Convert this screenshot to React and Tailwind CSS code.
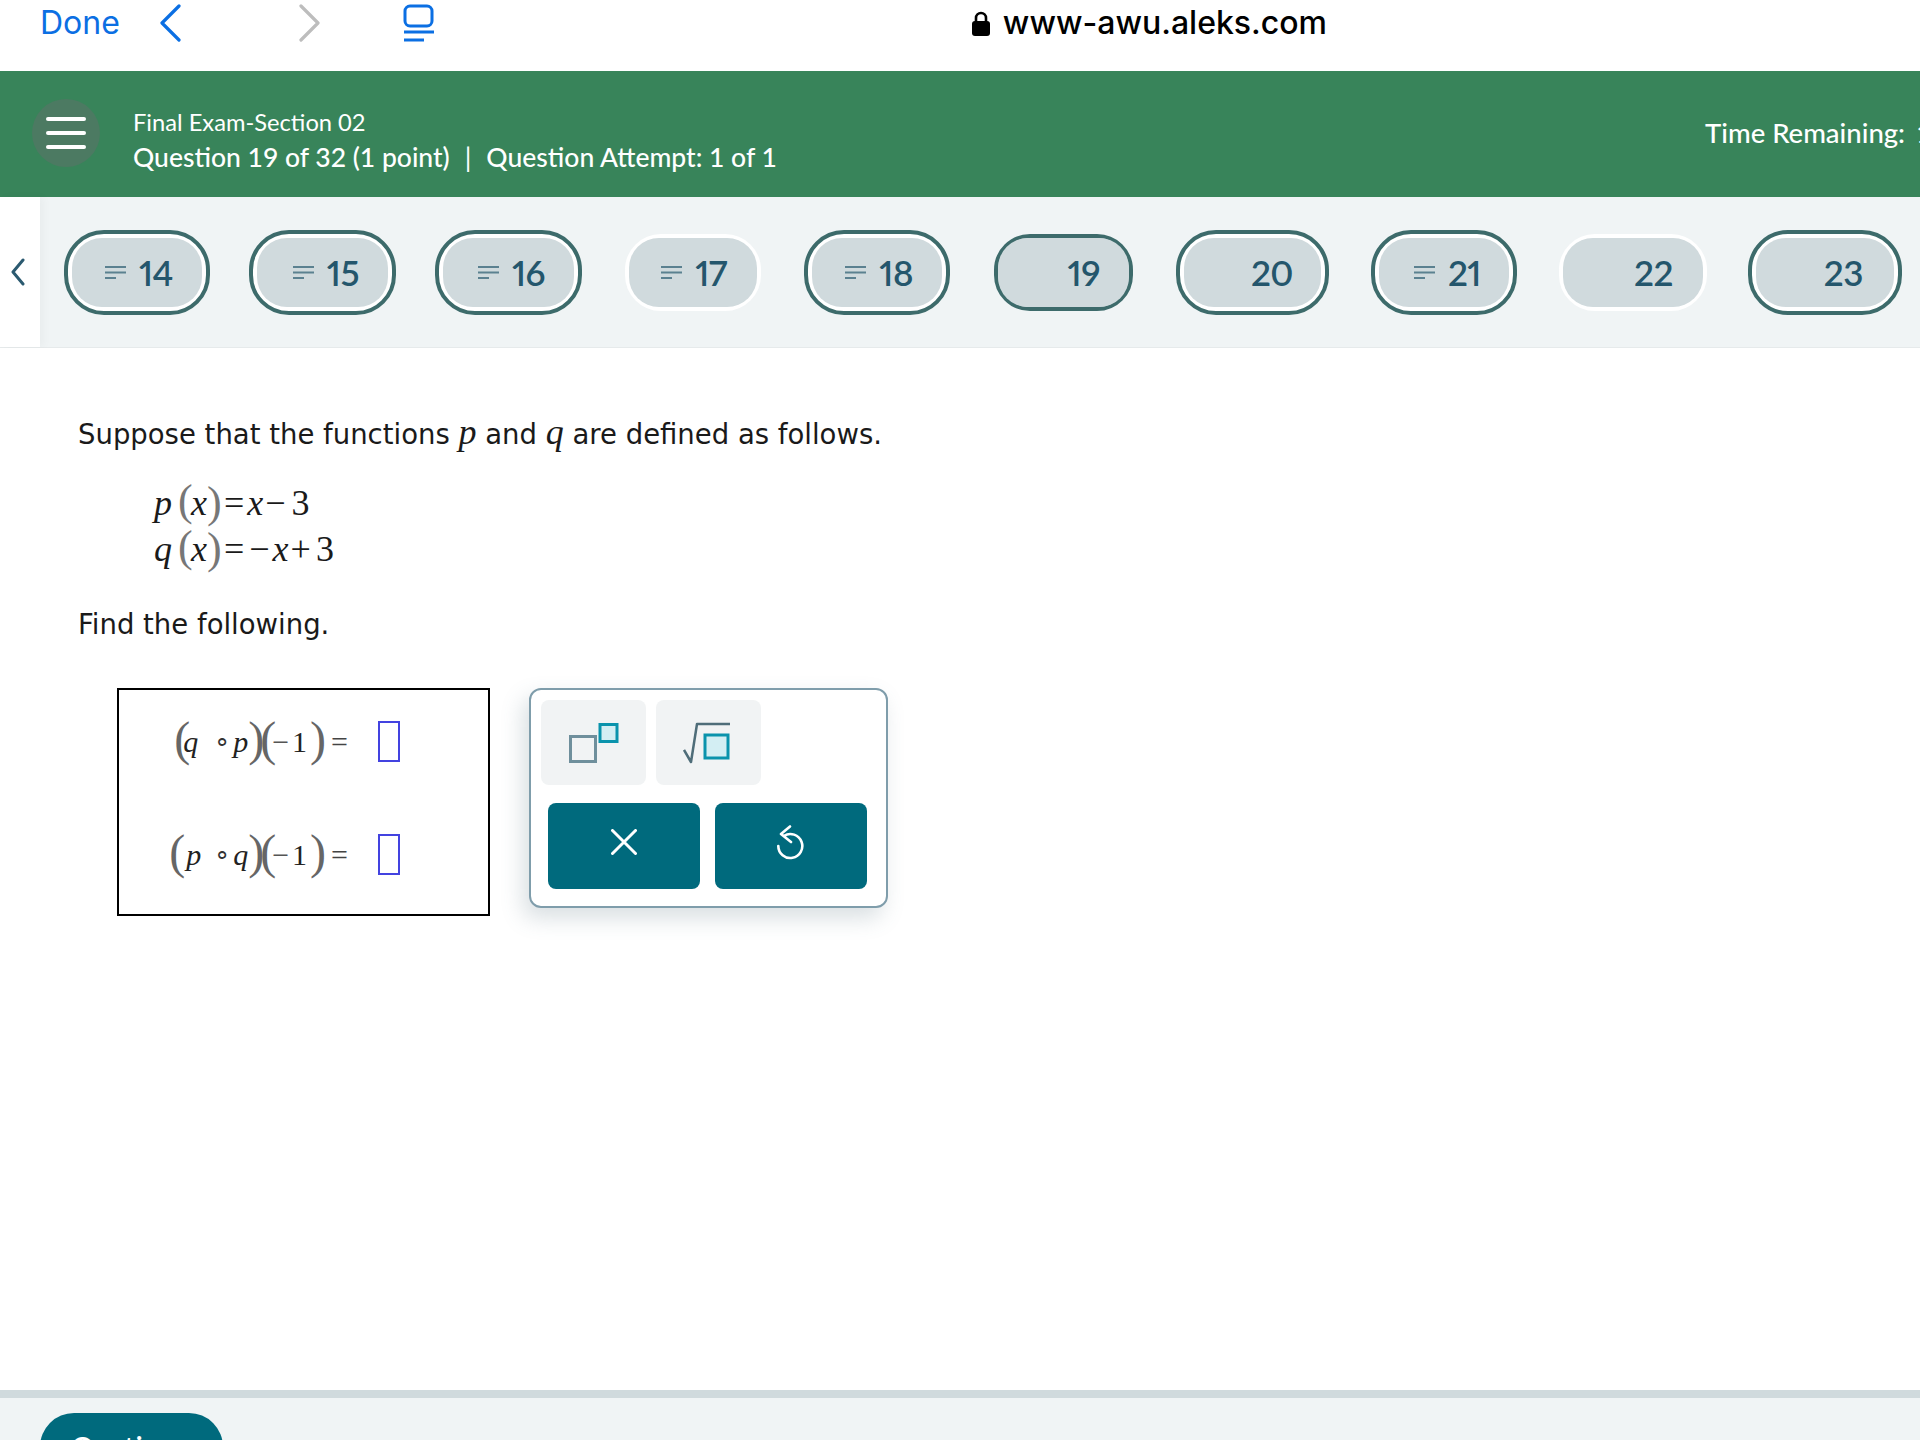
const pills = [
  { label: "14", flag: true, kind: "ring", width: "w-[146px]", gap: "ml-0", pad: "pr-[29px]" },
  { label: "15", flag: true, kind: "ring", width: "w-[147px]", gap: "ml-[39px]", pad: "pr-[29px]" },
  { label: "16", flag: true, kind: "ring", width: "w-[147px]", gap: "ml-[39px]", pad: "pr-[29px]" },
  { label: "17", flag: true, kind: "plain", width: "w-[136px]", gap: "ml-[43px]", pad: "pr-[30px]" },
  { label: "18", flag: true, kind: "ring", width: "w-[146px]", gap: "ml-[43px]", pad: "pr-[29px]" },
  { label: "19", flag: false, kind: "current", width: "w-[139px]", gap: "ml-[44px]", pad: "pr-[29px]" },
  { label: "20", flag: false, kind: "ring", width: "w-[153px]", gap: "ml-[43px]", pad: "pr-[28px]" },
  { label: "21", flag: true, kind: "ring", width: "w-[146px]", gap: "ml-[42px]", pad: "pr-[28px]" },
  { label: "22", flag: false, kind: "plain", width: "w-[148px]", gap: "ml-[42px]", pad: "pr-[30px]" },
  { label: "23", flag: false, kind: "ring", width: "w-[154px]", gap: "ml-[41px]", pad: "pr-[31px]" },
];

function FlagLines() {
  return (
    <svg width="22" height="14" viewBox="0 0 22 14" className="mr-[12px] mt-[2px] shrink-0">
      <rect x="0" y="0" width="21" height="2" fill="#5b8190" />
      <rect x="0" y="5.5" width="21" height="2" fill="#5b8190" />
      <rect x="0" y="11" width="11" height="2" fill="#5b8190" />
    </svg>
  );
}

function QuestionPill({ pill }) {
  const inner = (
    <div className={`flex h-[69px] flex-1 items-center justify-end rounded-[30px] bg-[#d0dadd] ${pill.pad}`}>
      {pill.flag && <FlagLines />}
      <span className="font-['Lato',sans-serif] text-[35px] font-semibold leading-none tracking-[-0.5px] text-[#24566c] proportional-nums">
        {pill.label}
      </span>
    </div>
  );

  if (pill.kind === "ring") {
    return (
      <div className={`flex h-[85px] rounded-[40px] border-[4px] border-[#3d6b6b] bg-white p-[4px] ${pill.width} ${pill.gap}`}>
        {inner}
      </div>
    );
  }
  if (pill.kind === "current") {
    return (
      <div className={`flex h-[77px] rounded-[36px] border-[4px] border-[#3d6b6b] bg-[#d0dadd] ${pill.width} ${pill.gap}`}>
        {inner}
      </div>
    );
  }
  return (
    <div className={`flex h-[77px] rounded-[36px] border-[4px] border-white bg-white ${pill.width} ${pill.gap}`}>
      {inner}
    </div>
  );
}

function BrowserBar() {
  return (
    <div className="flex h-[71px] items-start bg-white">
      <span className="ml-[40px] mt-[3px] font-['Inter',sans-serif] text-[32px] leading-[40px] text-[#0b6fe3]">Done</span>
      <svg width="24" height="38" viewBox="0 0 24 38" fill="none" className="ml-[38px] mt-[4px]">
        <path d="M21 2 L4 19 L21 36" stroke="#0b6fe3" strokeWidth="3.2" strokeLinecap="round" strokeLinejoin="round" />
      </svg>
      <svg width="24" height="38" viewBox="0 0 24 38" fill="none" className="ml-[116px] mt-[4px]">
        <path d="M3 2 L20 19 L3 36" stroke="#bdbdbd" strokeWidth="3.2" strokeLinecap="round" strokeLinejoin="round" />
      </svg>
      <svg width="32" height="38" viewBox="0 0 32 38" fill="none" className="ml-[81px] mt-[4px]">
        <rect x="2" y="2" width="27" height="20" rx="5" stroke="#0b6fe3" strokeWidth="3" />
        <path d="M1 28 H31" stroke="#0b6fe3" strokeWidth="3" />
        <path d="M1 36 H21" stroke="#0b6fe3" strokeWidth="3" />
      </svg>
      <svg width="18" height="27" viewBox="0 0 18 27" className="ml-[537px] mt-[10px]">
        <path d="M4 12 V8 a5 5 0 0 1 10 0 V12" fill="none" stroke="#000" strokeWidth="2.6" />
        <rect x="0" y="11" width="18" height="15" rx="3" fill="#000" />
      </svg>
      <span className="ml-[13px] mt-[2px] font-['Inter',sans-serif] text-[32px] font-medium leading-[42px] text-black">www-awu.aleks.com</span>
    </div>
  );
}

function ExamHeader() {
  return (
    <div className="flex h-[126px] items-center overflow-hidden bg-[#38845a] pb-[2px]">
      <div className="ml-[32px] flex h-[68px] w-[68px] shrink-0 flex-col items-center justify-center gap-[10px] rounded-full bg-[#4c7a62]">
        <div className="h-[4px] w-[40px] rounded-full bg-white" />
        <div className="h-[4px] w-[40px] rounded-full bg-white" />
        <div className="h-[4px] w-[40px] rounded-full bg-white" />
      </div>
      <div className="ml-[33px] mt-[14px] w-[700px] font-['Lato',sans-serif] text-white">
        <div className="text-[23.7px] leading-[30px]">Final Exam-Section 02</div>
        <div className="mt-[3px] text-[26.5px] font-medium leading-[34px]">
          Question 19 of 32 (1 point)<span className="mx-[15px] font-normal">|</span>Question Attempt: 1 of 1
        </div>
      </div>
      <div className="ml-auto w-[215px] shrink-0 whitespace-nowrap font-['Lato',sans-serif] text-[27.5px] font-medium text-white">
        Time Remaining: <span className="ml-[4px]">1</span>
      </div>
    </div>
  );
}

function PillStrip() {
  return (
    <div className="flex h-[151px] border-b border-[#e6eaeb] bg-[#f0f4f5]">
      <div className="flex w-[40px] shrink-0 items-center bg-white pl-[10px] shadow-[4px_0_8px_rgba(0,0,0,0.03)]">
        <svg width="15" height="28" viewBox="0 0 15 28" fill="none">
          <path d="M13 2 L3 14 L13 26" stroke="#2b5a70" strokeWidth="3" strokeLinecap="round" strokeLinejoin="round" />
        </svg>
      </div>
      <div className="ml-[24px] flex items-center">
        {pills.map((pill) => (
          <QuestionPill key={pill.label} pill={pill} />
        ))}
      </div>
    </div>
  );
}

function Paren({ children }) {
  return <span className="inline-block w-[13px] text-center text-[44px] font-light leading-[40px] text-[#777]">{children}</span>;
}

function BigParen({ children }) {
  return <span className="-mt-[6px] w-[12px] text-center text-[48px] leading-none text-[#666]">{children}</span>;
}

function AnswerRow({ children, className }) {
  return (
    <div className={`flex h-[41px] items-center justify-end font-['Liberation_Serif',serif] text-[30px] leading-none text-[#222] ${className}`}>
      {children}
      <span className="ml-[9px] text-[#444]">=</span>
      <div className="ml-[30px] mr-[88px] h-[41px] w-[22px] border-2 border-[#4343e0]" />
    </div>
  );
}

function AnswerBox() {
  return (
    <div className="flex h-[228px] w-[373px] flex-col border-2 border-black pt-[31px]">
      <AnswerRow>
        <BigParen>(</BigParen>
        <i className="ml-[-3px] mr-[5px]">q</i>
        <span className="ml-[11px] mr-[3px] text-[26px] text-[#333]">∘</span>
        <i>p</i>
        <BigParen>)</BigParen>
        <BigParen>(</BigParen>
        <span className="text-[#555]">−</span>
        <span className="mx-[3px]">1</span>
        <BigParen>)</BigParen>
      </AnswerRow>
      <AnswerRow className="mt-[72px]">
        <BigParen>(</BigParen>
        <i className="ml-[5px] mr-[2px]">p</i>
        <span className="ml-[11px] mr-[3px] text-[26px] text-[#333]">∘</span>
        <i>q</i>
        <BigParen>)</BigParen>
        <BigParen>(</BigParen>
        <span className="text-[#555]">−</span>
        <span className="mx-[3px]">1</span>
        <BigParen>)</BigParen>
      </AnswerRow>
    </div>
  );
}

function MathPalette() {
  return (
    <div className="ml-[39px] h-[220px] w-[359px] rounded-[12px] border-2 border-[#7f9dab] bg-white pl-[10px] pt-[10px] shadow-[-6px_10px_22px_rgba(80,110,125,0.22)]">
      <div className="flex gap-[10px]">
        <div className="flex h-[85px] w-[105px] items-center justify-center rounded-[8px] bg-[#f1f3f4]">
          <svg width="50" height="40" viewBox="0 0 50 40" fill="none">
            <rect x="1.5" y="13.5" width="25" height="25" stroke="#6f8f9c" strokeWidth="3" />
            <rect x="31" y="1.5" width="17" height="17" fill="#d3eef3" stroke="#0a93ac" strokeWidth="3" />
          </svg>
        </div>
        <div className="flex h-[85px] w-[105px] items-center justify-center rounded-[8px] bg-[#f1f3f4] pr-[4px]">
          <svg width="48" height="42" viewBox="0 0 48 42" fill="none">
            <path d="M1 28 L8 40 L14 2 H47" stroke="#4f6d79" strokeWidth="2.5" strokeLinejoin="round" />
            <rect x="22" y="13" width="23" height="23" fill="#d3eef3" stroke="#0a93ac" strokeWidth="3" />
          </svg>
        </div>
      </div>
      <div className="ml-[7px] mt-[18px] flex gap-[15px]">
        <button className="flex h-[86px] w-[152px] items-center justify-center rounded-[8px] bg-[#006a7d] pb-[8px]">
          <svg width="26" height="26" viewBox="0 0 26 26" fill="none">
            <path d="M1.5 1.5 L24.5 24.5 M24.5 1.5 L1.5 24.5" stroke="#fff" strokeWidth="3" strokeLinecap="round" />
          </svg>
        </button>
        <button className="flex h-[86px] w-[152px] items-center justify-center rounded-[8px] bg-[#006a7d] pb-[8px]">
          <svg width="30" height="36" viewBox="0 0 30 36" fill="none">
            <path d="M14 2.5 L5 10 L15 18 M8 11.8 A12 12 0 1 1 2.3 22" stroke="#fff" strokeWidth="2.6" strokeLinecap="round" strokeLinejoin="round" />
          </svg>
        </button>
      </div>
    </div>
  );
}

function QuestionBody() {
  return (
    <div className="flex-1 bg-white pl-[78px] pt-[62px]">
      <p className="font-['DejaVu_Sans',sans-serif] text-[27.5px] leading-[44px] text-[#1a1a1a]">
        Suppose that the functions{" "}
        <i className="font-['Liberation_Serif',serif] text-[36px]">p</i> and{" "}
        <i className="font-['Liberation_Serif',serif] text-[36px]">q</i> are defined as follows.
      </p>
      <div className="ml-[76px] mt-[24px] font-['Liberation_Serif',serif] text-[36px] leading-[46px] text-[#1a1a1a]">
        <div className="flex h-[46px] items-center">
          <i>p</i>
          <span className="ml-[6px]"><Paren>(</Paren></span>
          <i>x</i>
          <Paren>)</Paren>
          <span className="ml-[4px]">=</span>
          <i className="ml-[3px]">x</i>
          <span className="ml-[2px]">−</span>
          <span className="ml-[6px]">3</span>
        </div>
        <div className="flex h-[46px] items-center">
          <i>q</i>
          <span className="ml-[6px]"><Paren>(</Paren></span>
          <i>x</i>
          <Paren>)</Paren>
          <span className="ml-[4px]">=</span>
          <span className="ml-[5px]">−</span>
          <i className="ml-[3px]">x</i>
          <span className="ml-[2px]">+</span>
          <span className="ml-[5px]">3</span>
        </div>
      </div>
      <p className="mt-[30px] font-['DejaVu_Sans',sans-serif] text-[27.5px] leading-[44px] text-[#1a1a1a]">Find the following.</p>
      <div className="ml-[39px] mt-[42px] flex items-start">
        <AnswerBox />
        <MathPalette />
      </div>
    </div>
  );
}

function BottomBar() {
  return (
    <div className="h-[50px] shrink-0 overflow-hidden border-t-[8px] border-[#d0dadd] bg-[#f0f4f5] pl-[40px] pt-[15px]">
      <div className="flex h-[80px] w-[183px] justify-center rounded-[34px] bg-[#006a7d] pt-[16px] font-['Lato',sans-serif] text-[30px] font-medium leading-[36px] text-white">
        Continue
      </div>
    </div>
  );
}

export default function App() {
  return (
    <div className="flex h-[1440px] w-[1920px] flex-col overflow-hidden bg-white">
      <BrowserBar />
      <ExamHeader />
      <PillStrip />
      <QuestionBody />
      <BottomBar />
    </div>
  );
}
